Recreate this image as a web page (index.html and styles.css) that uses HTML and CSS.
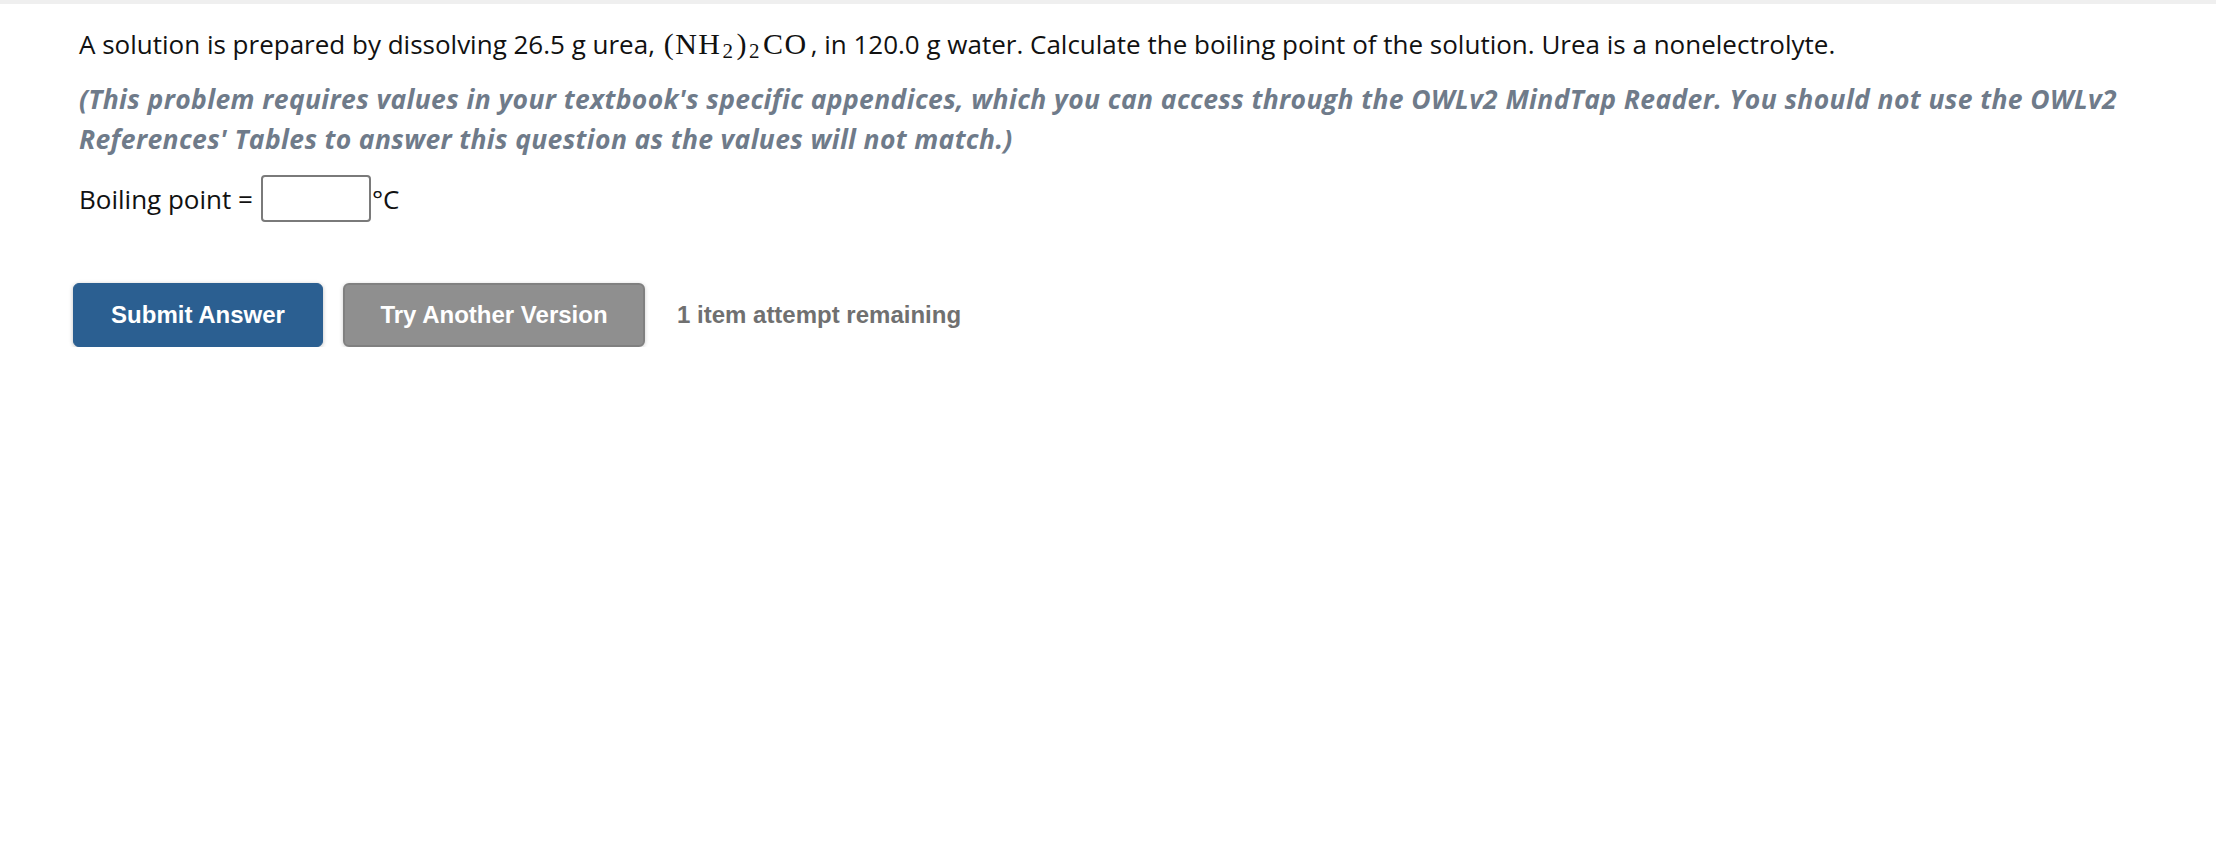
FILE: index.html
```html
<!DOCTYPE html>
<html>
<head>
<meta charset="utf-8">
<link rel="stylesheet" href="styles.css">
</head>
<body>
<div class="topbar"></div>
<main class="content">
  <p class="question">A solution is prepared by dissolving 26.5 g urea, <span class="math">(NH<sub>2</sub>)<sub>2</sub>CO</span>, in 120.0 g water. Calculate the boiling point of the solution. Urea is a nonelectrolyte.</p>
  <p class="note">(This problem requires values in your textbook's specific appendices, which you can access through the OWLv2 MindTap Reader. You should not use the OWLv2 References' Tables to answer this question as the values will not match.)</p>
  <div class="answer-row">
    <span class="label">Boiling point =</span>
    <input class="answer-input" type="text">
    <span class="unit">°C</span>
  </div>
  <div class="actions">
    <button class="btn btn-primary">Submit Answer</button>
    <button class="btn btn-secondary">Try Another Version</button>
    <span class="attempts">1 item attempt remaining</span>
  </div>
</main>
</body>
</html>
```
FILE: styles.css
```css
html, body {
  margin: 0;
  padding: 0;
  background: #ffffff;
}
.topbar {
  height: 4px;
  background: #efefef;
}
.content {
  width: 2038px;
  padding-left: 79px;
  font-family: "Open Sans", "Noto Sans", sans-serif;
  color: #111;
}
.question {
  margin: 0;
  padding-top: 22px;
  font-size: 26px;
  line-height: 36px;
}
.math {
  font-family: "Liberation Serif", "DejaVu Serif", serif;
  font-size: 30px;
  letter-spacing: 1.5px;
  margin: 0 3px 0 2px;
}
.math sub {
  font-size: 21px;
  vertical-align: -4px;
  line-height: 0;
  margin: 0 2px 0 1px;
}
.note {
  margin: 0;
  padding-top: 18px;
  font-size: 26.5px;
  line-height: 39.6px;
  letter-spacing: 0.35px;
  font-style: italic;
  font-weight: 700;
  color: #6f7b8a;
  text-align: justify;
}
.answer-row {
  display: flex;
  align-items: center;
  margin-top: 16px;
  font-size: 26px;
}
.label {
  margin-right: 8px;
}
.answer-input {
  width: 110px;
  height: 47px;
  box-sizing: border-box;
  border: 2px solid #7a7a7a;
  border-radius: 4px;
  margin: 0;
  padding: 0;
  background: #fff;
}
.unit {
  margin-left: 1px;
}
.actions {
  display: flex;
  align-items: center;
  margin-top: 61px;
  margin-left: -6px;
}
.btn {
  height: 64px;
  box-sizing: border-box;
  border-radius: 6px;
  font-family: "Liberation Sans", Arial, sans-serif;
  font-weight: 700;
  font-size: 24px;
  color: #ffffff;
  padding: 0;
  margin: 0;
}
.btn-primary {
  width: 250px;
  background: #2b5f91;
  border: 1px solid #2b5f91;
  box-shadow: 0 1px 4px rgba(0,0,0,0.25);
}
.btn-secondary {
  width: 302px;
  margin-left: 20px;
  background: #8f8f8f;
  border: 2px solid #808080;
  box-shadow: 0 1px 4px rgba(0,0,0,0.2);
}
.attempts {
  margin-left: 32px;
  font-family: "Liberation Sans", Arial, sans-serif;
  font-weight: 700;
  font-size: 24px;
  color: #707070;
}
```
